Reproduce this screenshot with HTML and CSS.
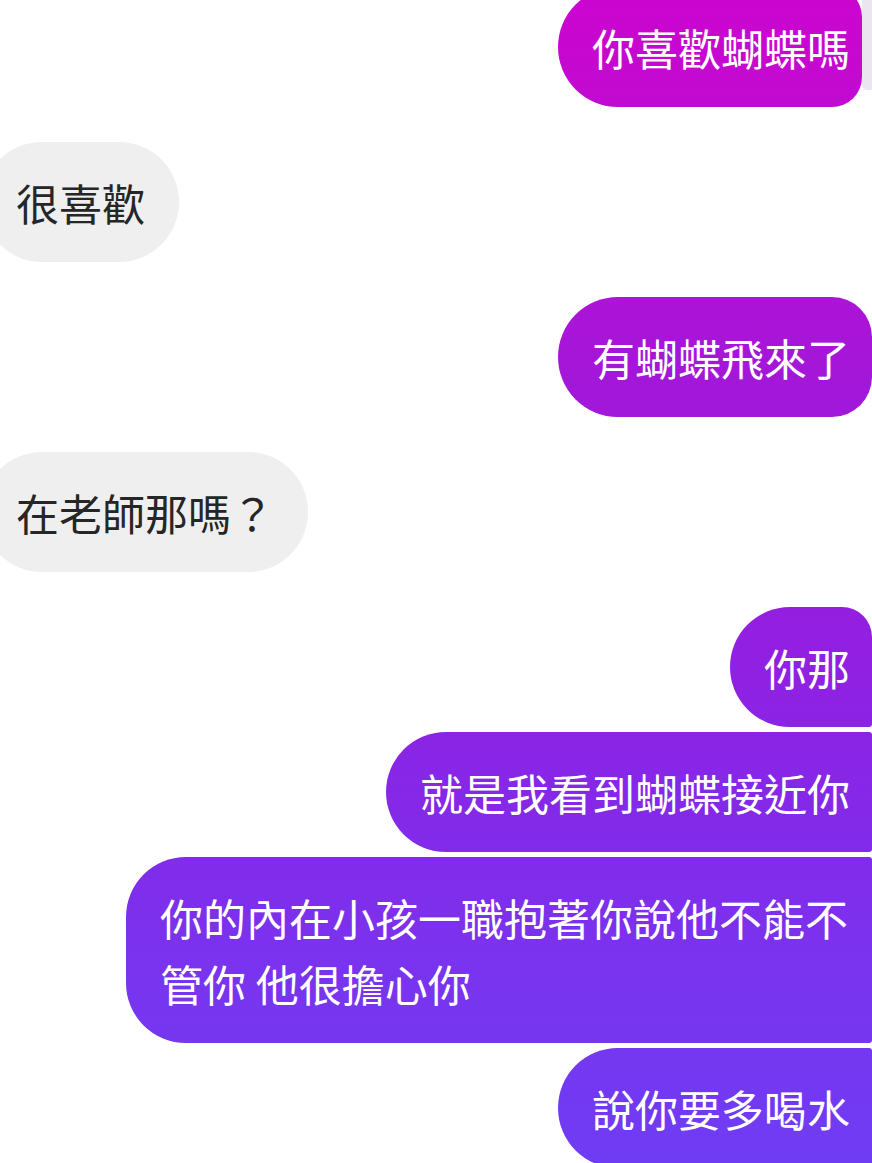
FILE: index.html
```html
<!DOCTYPE html>
<html lang="zh-Hant">
<head>
<meta charset="utf-8">
<title>Chat</title>
<link rel="stylesheet" href="styles.css">
</head>
<body>
<div class="edge-strip"></div>
<main class="thread">
  <div class="group sent first-group">
    <div class="bubble out solo-top">你喜歡蝴蝶嗎</div>
  </div>
  <div class="group received">
    <div class="bubble in">很喜歡</div>
  </div>
  <div class="group sent">
    <div class="bubble out solo">有蝴蝶飛來了</div>
  </div>
  <div class="group received">
    <div class="bubble in">在老師那嗎？</div>
  </div>
  <div class="group sent">
    <div class="bubble out head">你那</div>
    <div class="bubble out mid">就是我看到蝴蝶接近你</div>
    <div class="bubble out mid wide">你的內在小孩一職抱著你說他不能不管你 他很擔心你</div>
    <div class="bubble out mid">說你要多喝水</div>
  </div>
</main>
</body>
</html>
```

FILE: styles.css
```css
html, body {
  margin: 0;
  padding: 0;
  background: #ffffff;
  overflow: hidden;
}

body {
  width: 872px;
  height: 1163px;
  font-family: "Noto Sans CJK TC", "Noto Sans CJK SC", "Noto Sans", sans-serif;
  font-size: 43px;
  line-height: 66px;
}

.edge-strip {
  position: absolute;
  top: 0;
  right: 0;
  width: 10px;
  height: 90px;
  background: #ebe5ef;
  border-bottom-left-radius: 5px;
  z-index: 2;
}

.thread {
  display: flex;
  flex-direction: column;
  gap: 35px;
  margin-top: -13px;
}

.group {
  display: flex;
  flex-direction: column;
  gap: 5px;
}

.group.sent {
  align-items: flex-end;
}

.group.received {
  align-items: flex-start;
}

.bubble {
  box-sizing: border-box;
  padding: 27px 22px 27px 34px;
  white-space: normal;
  word-break: break-all;
}

.bubble.in {
  margin-left: -18px;
  padding: 27px 34px;
  background: #efefef;
  color: #262626;
  border-radius: 60px;
}

.bubble.out {
  color: #ffffff;
  background-image: linear-gradient(to bottom,
    #cb05cf 0px,
    #b80fd3 200px,
    #a317d9 380px,
    #9120e2 660px,
    #8528e8 800px,
    #7a33ee 960px,
    #6f3cf4 1163px);
  background-attachment: fixed;
  border-radius: 60px 3px 3px 60px;
}

.bubble.out.solo-top {
  margin-right: 10px;
  padding-right: 12px;
  border-radius: 60px 30px 30px 60px;
}

.bubble.out.solo {
  border-radius: 60px 40px 40px 60px;
}

.bubble.out.head {
  border-radius: 60px 30px 3px 60px;
}

.bubble.out.wide {
  max-width: 746px;
}
```
